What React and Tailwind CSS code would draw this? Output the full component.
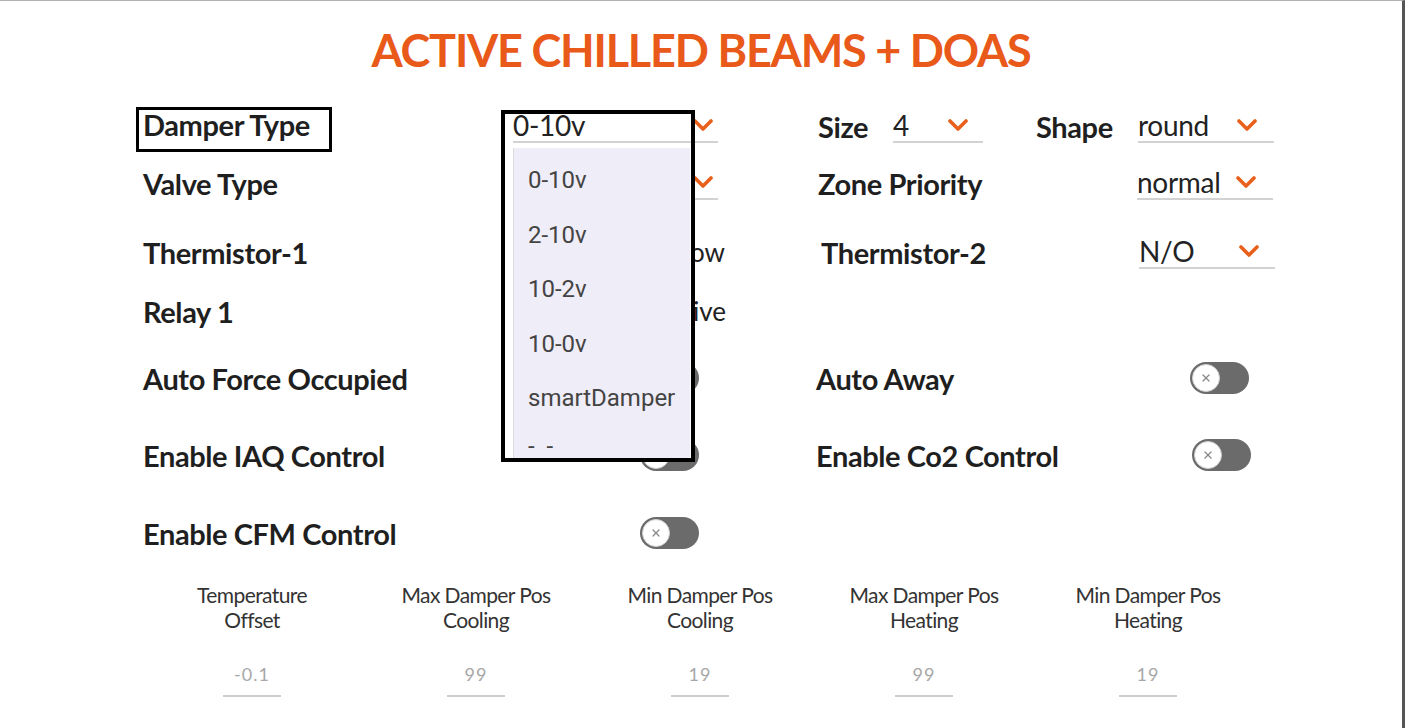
import React from 'react';
import { X } from 'lucide-react';

const Chevron = () => (
  <svg width="20" height="12" viewBox="0 0 20 12" fill="none">
    <polyline points="2,2 10,10 18,2" stroke="#e8601c" strokeWidth="3.6" strokeLinecap="round" strokeLinejoin="round" />
  </svg>
);

const Select = ({ value, width, pad = 'pr-[17px]' }) => (
  <div className={`flex items-center justify-between h-[34px] border-b-2 border-[#d2d2d2] ${width} ${pad}`}>
    <span className="text-[28px] leading-none text-[#222] tracking-[-0.3px]">{value}</span>
    <Chevron />
  </div>
);

const Toggle = ({ className = '' }) => (
  <div className={`w-[59px] h-[32px] rounded-full bg-[#6b6b6b] flex items-center pl-[2px] shrink-0 ${className}`}>
    <div className="w-[28px] h-[28px] rounded-full bg-white border border-[#cfcfcf] flex items-center justify-center">
      <X className="w-[12px] h-[12px] text-[#888]" strokeWidth={2.5} />
    </div>
  </div>
);

const Label = ({ children, className = '' }) => (
  <span className={`text-[29px] font-bold leading-none text-[#1f1f1f] tracking-[-0.4px] whitespace-nowrap ${className}`}>{children}</span>
);

const Row = ({ left, middle, right, className = '' }) => (
  <div className={`flex items-center h-10 pl-[143px] ${className}`}>
    <div className="w-[370px] shrink-0 flex items-center">{left}</div>
    <div className="w-[205px] shrink-0 flex items-center relative">{middle}</div>
    <div className="w-[100px] shrink-0" />
    <div className="flex-1 flex items-center">{right}</div>
  </div>
);

const menuItems = ['0-10v', '2-10v', '10-2v', '10-0v', 'smartDamper'];

const params = [
  ['Temperature', 'Offset', '-0.1'],
  ['Max Damper Pos', 'Cooling', '99'],
  ['Min Damper Pos', 'Cooling', '19'],
  ['Max Damper Pos', 'Heating', '99'],
  ['Min Damper Pos', 'Heating', '19'],
];

export default function App() {
  return (
    <div className="w-[1405px] h-[728px] bg-white border-t border-[#b0b0b0] border-r-[3px] border-r-[#555] overflow-hidden" style={{ fontFamily: 'Lato, "Noto Sans", sans-serif' }}>
      {/* Title */}
      <div className="h-[99px] flex items-center justify-center">
        <h1 className="text-[45px] font-bold text-[#e8591a] tracking-[-1.2px] leading-none">ACTIVE CHILLED BEAMS + DOAS</h1>
      </div>

      {/* Row 1 */}
      <Row
        className="mt-[6px]"
        left={
          <div className="-ml-[7px] mt-[7px] border-[3px] border-black w-[196px] h-[45px] flex items-start pl-[4px] pt-0 shrink-0">
            <Label>Damper Type</Label>
          </div>
        }
        middle={
          <>
            <Select value="0-10v" width="w-[205px]" pad="pr-[5px]" />
            {/* open dropdown */}
            <div className="absolute left-[-12px] top-[1px] w-[194px] h-[352px] border-4 border-black z-10 flex flex-col">
              <div className="h-[34px] shrink-0" />
              <div className="flex-1 bg-white pl-[8px] overflow-hidden">
                <div className="h-full w-[177px] bg-[#efedf7] border-l border-[#dcdce0] pt-[5px] overflow-hidden" style={{ fontFamily: 'Roboto, sans-serif' }}>
                  {menuItems.map((m) => (
                    <div key={m} className="h-[54.5px] flex items-center pl-[14px] text-[24px] text-[#444] leading-none">{m}</div>
                  ))}
                  <div className="h-[40px] flex items-center pl-[14px] text-[24px] text-[#444] leading-none whitespace-pre">{'-  -'}</div>
                </div>
              </div>
            </div>
          </>
        }
        right={
          <>
            <Label className="w-[75px] shrink-0">Size</Label>
            <Select value="4" width="w-[90px]" pad="pr-[15px]" />
            <Label className="ml-[53px] w-[102px] shrink-0">Shape</Label>
            <Select value="round" width="w-[136px]" />
          </>
        }
      />

      {/* Row 2 */}
      <Row
        className="mt-[17px]"
        left={<Label>Valve Type</Label>}
        middle={<Select value="0-10v" width="w-[205px]" pad="pr-[5px]" />}
        right={
          <>
            <Label className="w-[319px] shrink-0">Zone Priority</Label>
            <Select value="normal" width="w-[136px]" />
          </>
        }
      />

      {/* Row 3 */}
      <Row
        className="mt-[29px]"
        left={<Label>Thermistor-1</Label>}
        middle={<span className="w-[212px] shrink-0 text-right text-[26px] leading-none text-[#222]">Airflow</span>}
        right={
          <>
            <Label className="w-[321px] shrink-0 pl-[3px]">Thermistor-2</Label>
            <Select value="N/O" width="w-[136px]" pad="pr-[16px]" />
          </>
        }
      />

      {/* Row 4 */}
      <Row
        className="mt-[19px]"
        left={<Label>Relay 1</Label>}
        middle={<span className="w-[213px] shrink-0 text-right text-[26px] leading-none text-[#222]">Active</span>}
      />

      {/* Row 5 */}
      <Row
        className="mt-[27px]"
        left={<Label>Auto Force Occupied</Label>}
        middle={<Toggle className="ml-[127px]" />}
        right={
          <>
            <Label className="w-[374px] shrink-0 -ml-[2px]">Auto Away</Label>
            <Toggle />
          </>
        }
      />

      {/* Row 6 */}
      <Row
        className="mt-[37px]"
        left={<Label>Enable IAQ Control</Label>}
        middle={<Toggle className="ml-[127px]" />}
        right={
          <>
            <Label className="w-[376px] shrink-0 -ml-[2px]">Enable Co2 Control</Label>
            <Toggle />
          </>
        }
      />

      {/* Row 7 */}
      <Row
        className="mt-[38px]"
        left={<Label>Enable CFM Control</Label>}
        middle={<Toggle className="ml-[127px]" />}
      />

      {/* Parameters */}
      <div className="grid grid-cols-5 w-[1120px] ml-[140px] mt-[29px]">
        {params.map(([a, b, v], i) => (
          <div key={i} className="flex flex-col items-center">
            <div className="text-[21px] leading-[25px] text-[#333] text-center tracking-[-0.6px] whitespace-nowrap">
              <div>{a}</div>
              <div>{b}</div>
            </div>
            <div className="mt-[31px] text-[18px] leading-[22px] text-[#a8a8a8] tracking-[1px]">{v}</div>
            <div className="w-[58px] h-[2px] bg-[#cccccc] mt-[10px]" />
          </div>
        ))}
      </div>
    </div>
  );
}
